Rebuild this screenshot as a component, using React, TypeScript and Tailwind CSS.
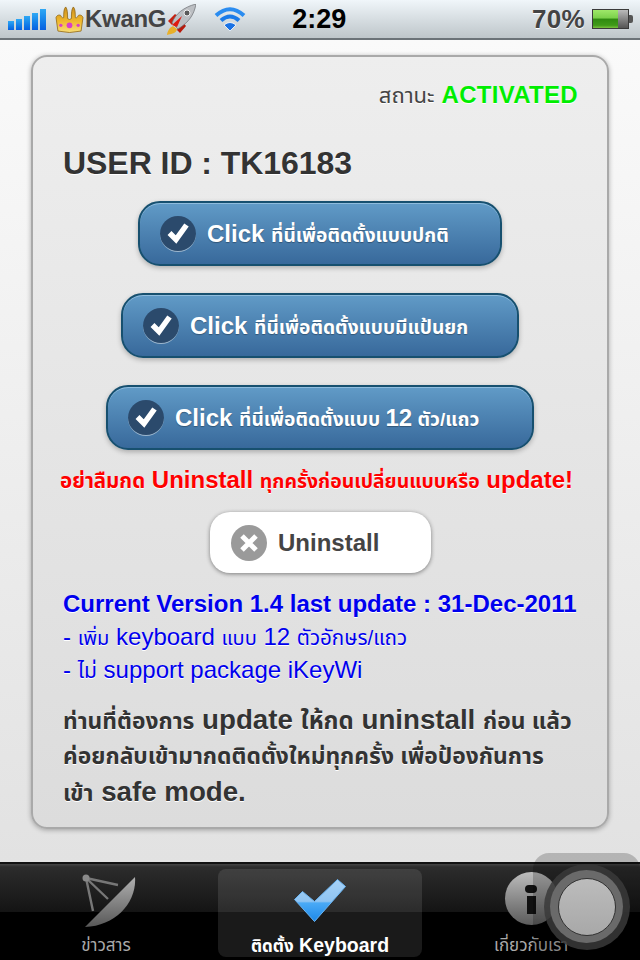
const font = { fontFamily: '"Liberation Sans", "Noto Sans Thai", "Noto Sans", "DejaVu Sans", sans-serif' };

function Signal() {
  return (
    <div className="flex items-end gap-[2px] h-[22px]">
      {[9, 11, 14, 17, 21].map((h) => (
        <div key={h} className="w-[6px] bg-gradient-to-b from-[#2fa8f4] to-[#0a5fe0]" style={{ height: h }} />
      ))}
    </div>
  );
}

function Crown() {
  return (
    <svg width="29" height="27" viewBox="0 0 30 28">
      <defs>
        <linearGradient id="cr" x1="0" y1="0" x2="0" y2="1">
          <stop offset="0" stopColor="#c98f20" />
          <stop offset="0.55" stopColor="#f0b82c" />
          <stop offset="1" stopColor="#f8de7a" />
        </linearGradient>
      </defs>
      <path d="M1 12 C2 9 5 9 6 10 C7 12 8 13 9 12 C9 7 9 3 11 1 C13 3 13 8 13 13 L15 14 L17 13 C17 8 17 3 19 1 C21 3 21 7 21 12 C22 13 23 12 24 10 C25 9 28 9 29 12 L27 26 Q15 29 3 26 Z" fill="url(#cr)" stroke="#8f6410" strokeWidth="0.8" />
      <circle cx="15" cy="20" r="3" fill="#d83fc8" />
      <circle cx="6" cy="20" r="1.7" fill="#d83fc8" />
      <circle cx="24" cy="20" r="1.7" fill="#d83fc8" />
    </svg>
  );
}

function Rocket() {
  return (
    <svg width="30" height="31" viewBox="0 0 30 31">
      <path d="M2 17 L9 10 L13 13 L6 21 Z" fill="#c8200f" />
      <path d="M14 29 L20 22 L16 17 L11 26 Z" fill="#b81a0c" />
      <path d="M7 22 C2 24 1 30 1 31 C5 30 11 29 11 25 Z" fill="#e8b02a" />
      <path d="M6 19 C9 10 18 3 30 0 C28 11 23 18 12 25 Z" fill="#bcbfc3" stroke="#6c6f73" strokeWidth="0.7" />
      <path d="M6 21 L16 12 L11 23 Z" fill="#e01a10" />
      <circle cx="21" cy="9" r="3" fill="#5a5a5a" stroke="#f0f0f0" strokeWidth="1" />
    </svg>
  );
}

function Wifi() {
  return (
    <svg width="32" height="26" viewBox="0 0 32 26">
      <path d="M16 25 L10 19 Q16 14 22 19 Z" fill="#1a72e4" stroke="#fff" strokeWidth="0.8" />
      <path d="M7 14.5 Q16 6.5 25 14.5" fill="none" stroke="#1a7ae8" strokeWidth="4" />
      <path d="M2 9.5 Q16 -3 30 9.5" fill="none" stroke="#2a8cf0" strokeWidth="4" />
    </svg>
  );
}

function Battery() {
  return (
    <div className="flex items-center">
      <div className="w-[37px] h-[20px] border border-[#3a3a3a] bg-gradient-to-b from-[#bbb] to-[#555] flex">
        <div className="w-[25px] h-full bg-[linear-gradient(#9fe86a_0%,#7ad04a_45%,#2f8a10_50%,#3f9a18_85%,#7ac040_100%)]" />
      </div>
      <div className="w-[4px] h-[8px] bg-[#555] rounded-r-[2px]" />
    </div>
  );
}

function StatusBar() {
  return (
    <div className="h-[40px] shrink-0 flex items-center pl-[8px] pr-[7px] bg-gradient-to-b from-[#f0f6fa] to-[#bec6ca] border-b-2 border-[#6b7378]">
      <Signal />
      <div className="ml-[9px]"><Crown /></div>
      <span className="ml-[1px] text-[24px] font-bold text-[#444] tracking-[-0.3px]">KwanG</span>
      <Rocket />
      <div className="ml-[18px]"><Wifi /></div>
      <span className="ml-[46px] text-[27px] font-bold text-black leading-none">2:29</span>
      <span className="ml-auto text-[26px] font-bold text-[#444] leading-none mr-[7px] tracking-[0.3px] [text-shadow:0_1px_0_#fff]">70%</span>
      <Battery />
    </div>
  );
}

function Check() {
  return (
    <div className="w-[36px] h-[36px] rounded-full bg-[#2b4a6c] border-b border-[#9db8cf] flex items-center justify-center shrink-0">
      <svg width="24" height="22" viewBox="0 0 24 22">
        <path d="M3.5 11 L10 17.5 L20.5 3" fill="none" stroke="#fff" strokeWidth="5.5" />
      </svg>
    </div>
  );
}

function InstallButton({ widthClass, children }: { widthClass: string; children: React.ReactNode }) {
  return (
    <div className={`${widthClass} h-[65px] rounded-[22px] border-2 border-[#17506f] bg-gradient-to-b from-[#619bc7] to-[#38699b] shadow-[inset_0_1px_0_#8fbcdd,0_2px_5px_rgba(0,0,0,0.25)] flex items-center pl-[20px] gap-[11px]`}>
      <Check />
      <span className="text-[24px] font-bold text-white whitespace-nowrap [text-shadow:0_1px_1px_rgba(0,0,0,0.3)]">
        Click {children}
      </span>
    </div>
  );
}

function Panel() {
  return (
    <div className="flex-1 rounded-[16px] border-2 border-[#a9a9a9] bg-gradient-to-b from-[#eeeeee] to-[#dcdcdc] shadow-[0_1px_5px_rgba(0,0,0,0.3)] pl-[30px] pr-[29px] flex flex-col [text-shadow:0_1px_0_#fff]">
      <div className="h-[38px] mt-[20px] flex items-baseline justify-end gap-[7px] text-[#444]">
        <span className="text-[22px]">สถานะ</span>
        <span className="text-[24px] font-bold text-[#00ee00] tracking-[0.3px]">ACTIVATED</span>
      </div>
      <div className="mt-[28px] text-[32px] leading-[40px] font-bold text-[#333] tracking-[-0.05px]">USER ID : TK16183</div>
      <div className="mt-[18px] flex flex-col items-center gap-[27px] -ml-[30px] -mr-[29px]">
        <InstallButton widthClass="w-[364px]"><span className="text-[19.2px]">ที่นี่เพื่อติดตั้งแบบปกติ</span></InstallButton>
        <InstallButton widthClass="w-[398px]"><span className="text-[19.2px]">ที่นี่เพื่อติดตั้งแบบมีแป้นยก</span></InstallButton>
        <InstallButton widthClass="w-[428px]">
          <span className="text-[19.2px]">ที่นี่เพื่อติดตั้งแบบ </span>12<span className="text-[19.2px]"> ตัว/แถว</span>
        </InstallButton>
      </div>
      <div className="mt-[14px] -ml-[3px] font-bold text-[#f00] text-[24px] leading-[32px] h-[32px] whitespace-nowrap">
        <span className="text-[20.5px]">อย่าลืมกด</span> Uninstall <span className="text-[19.4px]">ทุกครั้งก่อนเปลี่ยนแบบหรือ</span> update!
      </div>
      <div className="mt-[16px] self-center w-[221px] h-[61px] rounded-[20px] bg-white shadow-[0_1px_4px_rgba(0,0,0,0.45)] flex items-center pl-[21px] gap-[11px]">
        <div className="w-[36px] h-[36px] rounded-full bg-[#9a9a9a] flex items-center justify-center">
          <svg width="22" height="22" viewBox="0 0 22 22">
            <path d="M4 4 L18 18 M18 4 L4 18" stroke="#fff" strokeWidth="5" />
          </svg>
        </div>
        <span className="text-[24px] font-bold text-[#444]">Uninstall</span>
      </div>
      <div className="mt-[14px] text-[24px] leading-[33px] text-[#0000ee] whitespace-nowrap">
        <div className="h-[33px] font-bold">Current Version 1.4 last update : 31-Dec-2011</div>
        <div className="h-[33px]">- <span className="text-[20px]">เพิ่ม</span> keyboard <span className="text-[20px]">แบบ</span> 12 <span className="text-[20.6px]">ตัวอักษร/แถว</span></div>
        <div className="h-[33px]">- <span className="text-[21px]">ไม่</span> support package iKeyWi</div>
      </div>
      <div className="mt-[16px] text-[27.7px] leading-[36px] font-bold text-[#333] whitespace-nowrap">
        <div className="h-[36px]"><span className="text-[22.8px]">ท่านที่ต้องการ</span> update <span className="text-[24px]">ให้กด</span> uninstall <span className="text-[22.8px]">ก่อน แล้ว</span></div>
        <div className="h-[36px] text-[22.8px]">ค่อยกลับเข้ามากดติดตั้งใหม่ทุกครั้ง เพื่อป้องกันการ</div>
        <div className="h-[36px]"><span className="text-[22.8px]">เข้า</span> safe mode.</div>
      </div>
    </div>
  );
}

function Dish() {
  return (
    <svg width="54" height="54" viewBox="0 0 54 54">
      <defs>
        <linearGradient id="d" x1="0" y1="0" x2="0" y2="1">
          <stop offset="0" stopColor="#b0b0b0" />
          <stop offset="1" stopColor="#585858" />
        </linearGradient>
      </defs>
      <path d="M53 3 C55 28 34 52 3 53 Z" fill="url(#d)" />
      <path d="M4 4 L36 11 M4 4 L26 25 M4 4 L11 37" stroke="#777" strokeWidth="2.4" fill="none" />
      <circle cx="4" cy="4" r="3.5" fill="#8a8a8a" />
    </svg>
  );
}

function BlueCheck() {
  return (
    <svg width="52" height="44" viewBox="-0.5 -0.5 52 44">
      <defs>
        <linearGradient id="c" x1="0" y1="0" x2="0" y2="1">
          <stop offset="0" stopColor="#a6d2f7" />
          <stop offset="0.52" stopColor="#8fc4f2" />
          <stop offset="0.56" stopColor="#4aaaf6" />
          <stop offset="1" stopColor="#1c88e8" />
        </linearGradient>
      </defs>
      <path d="M0 20 L8 12 L20 22 L43 0 L51 7 L20 42 Z" fill="url(#c)" stroke="#6ab4f2" strokeWidth="1" strokeLinejoin="round" />
    </svg>
  );
}

function InfoIcon() {
  return (
    <div className="w-[53px] h-[53px] rounded-full bg-gradient-to-b from-[#bdbdbd] to-[#5c5c5c] flex flex-col items-center justify-center gap-[3px] pt-[1px]">
      <div className="w-[12px] h-[8px] rounded-full bg-[#111]" />
      <div className="w-[9px] h-[18px] bg-[#111]" />
    </div>
  );
}

function Tab({ icon, label, active, iconOffset }: { icon: React.ReactNode; label: React.ReactNode; active?: boolean; iconOffset?: string }) {
  return (
    <div className={`flex flex-col items-center h-[88px] rounded-[8px] ${active ? "bg-white/10 w-[204px]" : "w-[218px]"}`}>
      <div className={`h-[62px] flex items-center justify-center ${iconOffset ?? ""}`}>{icon}</div>
      <div className="h-[26px] pt-[4px] flex items-center">{label}</div>
    </div>
  );
}

function TabBar() {
  return (
    <div className="h-[98px] shrink-0 border-t-2 border-[#111] bg-[linear-gradient(#444_0px,#2c2c2c_3px,#141414_48px,#000_48px,#000_100%)] flex justify-between items-center pt-[1px]">
      <Tab icon={<Dish />} iconOffset="pt-[2px]" label={<span className="text-[17px] text-[#aaa] -ml-[6px] whitespace-nowrap">ข่าวสาร</span>} />
      <Tab
        active
        icon={<BlueCheck />}
        iconOffset="pt-[2px]"
        label={
          <span className="font-bold text-white whitespace-nowrap text-[19.5px]">
            <span className="text-[17px]">ติดตั้ง</span> Keyboard
          </span>
        }
      />
      <Tab icon={<InfoIcon />} iconOffset="pb-[2px]" label={<span className="text-[17px] text-[#aaa] whitespace-nowrap">เกี่ยวกับเรา</span>} />
    </div>
  );
}

function AssistiveTouch() {
  return (
    <div className="absolute left-[533px] top-[853px] w-[107px] h-[107px] rounded-tl-[16px] rounded-tr-[16px] bg-black/20 flex items-center justify-center">
      <div className="w-[86px] h-[86px] rounded-full bg-[#3a3a3a]/85 flex items-center justify-center">
        <div className="w-[73px] h-[73px] rounded-full bg-[#6a6a6a] flex items-center justify-center">
          <div className="w-[58px] h-[58px] rounded-full border border-[#333] bg-gradient-to-b from-[#bcbcbc] to-[#a8a8a8]" />
        </div>
      </div>
    </div>
  );
}

export default function App() {
  return (
    <div className="relative w-[640px] h-[960px] overflow-hidden flex flex-col bg-[#eee]" style={font}>
      <StatusBar />
      <div className="flex-1 flex flex-col px-[31px] pt-[15px] pb-[33px] bg-gradient-to-b from-[#fafafa] to-[#e2e2e2]">
        <Panel />
      </div>
      <TabBar />
      <AssistiveTouch />
    </div>
  );
}
